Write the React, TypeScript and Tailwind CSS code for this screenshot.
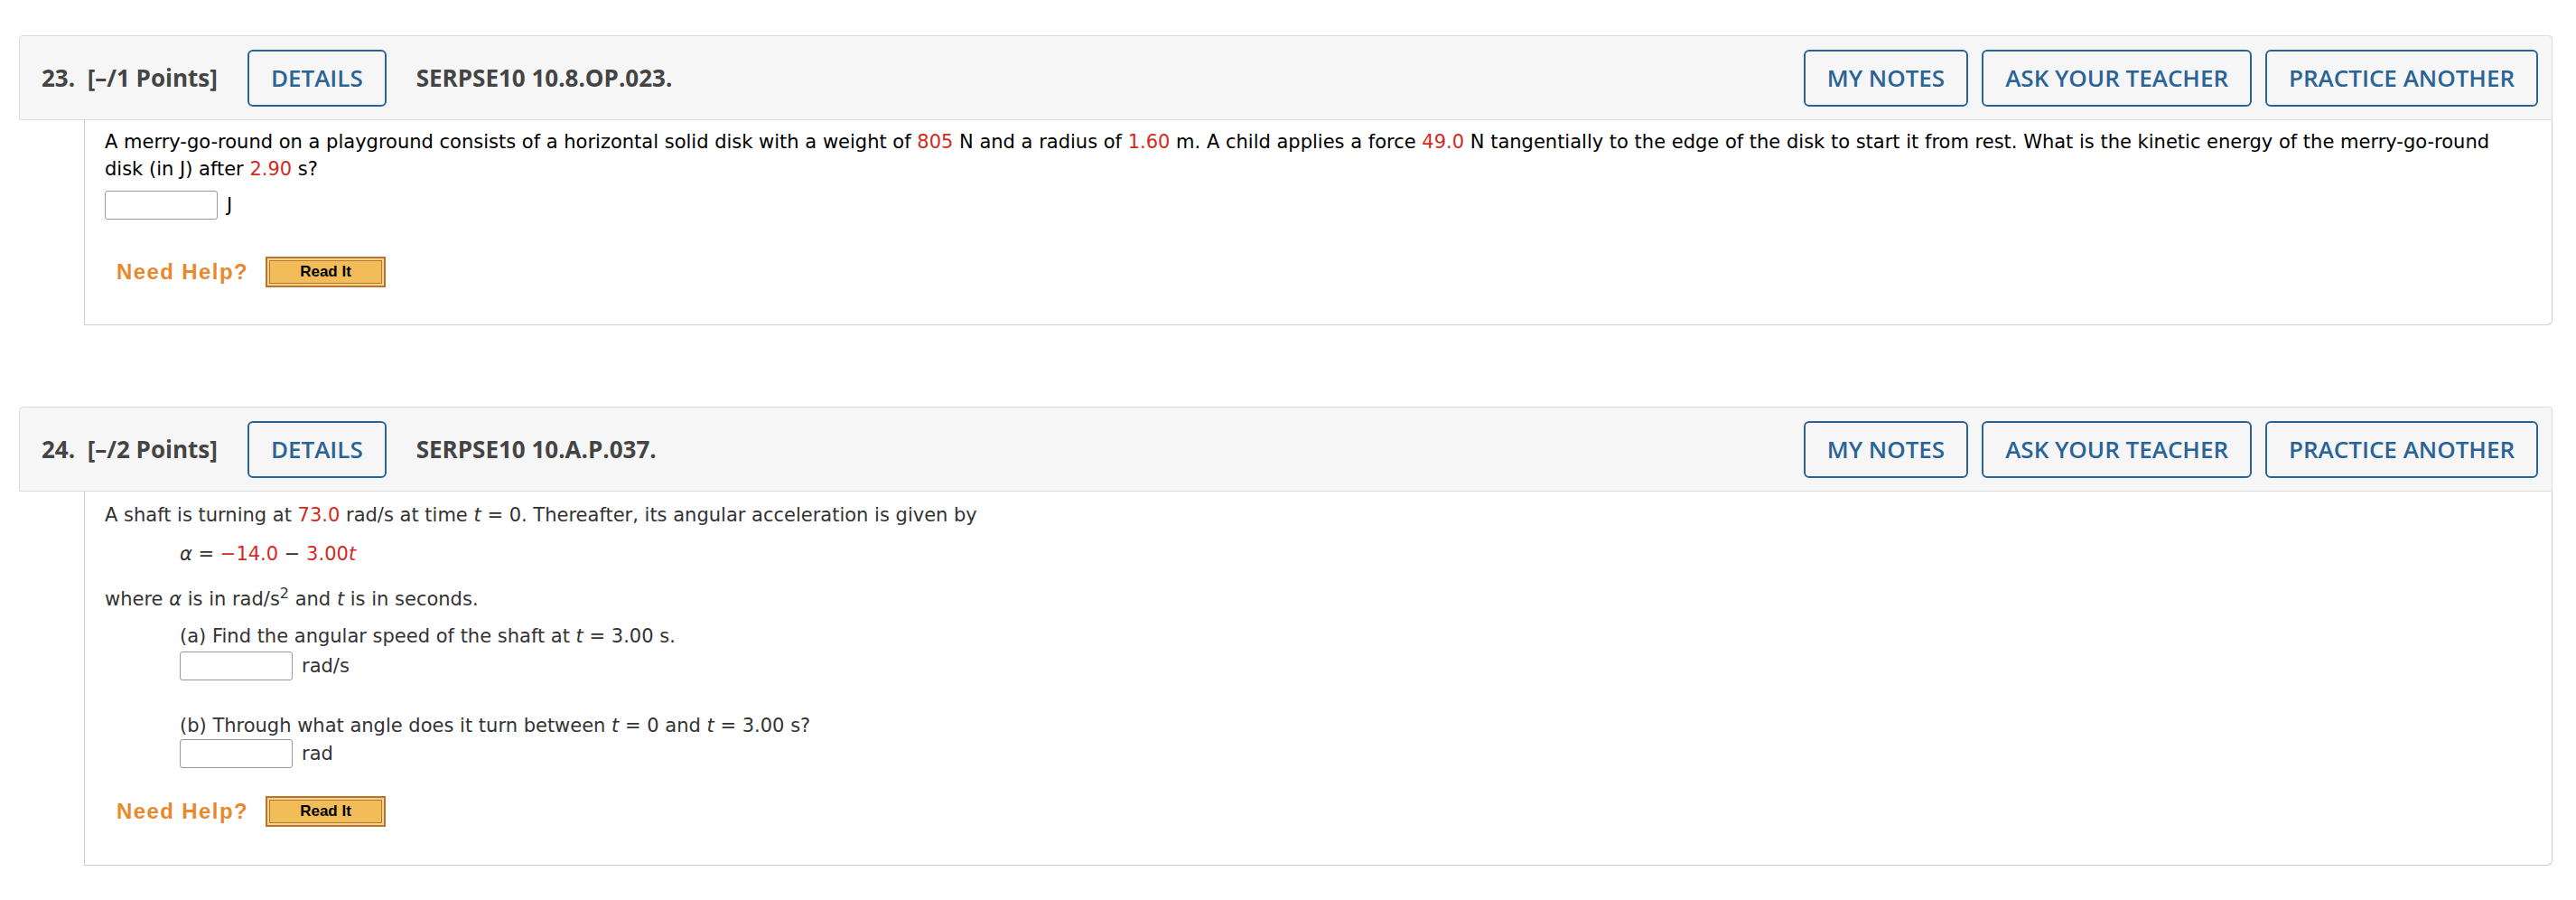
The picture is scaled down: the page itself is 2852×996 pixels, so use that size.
import React from 'react';

const sans = { fontFamily: '"Open Sans", "Liberation Sans", sans-serif' };
const verdana = { fontFamily: '"DejaVu Sans", Verdana, sans-serif' };

function OutlineButton({ label }: { label: string }) {
  return (
    <button
      className="h-[63px] px-[24px] rounded-[6px] border-2 border-[#2a6496] text-[#2a6496] text-[26px] font-semibold leading-none whitespace-nowrap"
      style={sans}
    >
      {label}
    </button>
  );
}

function QuestionHeader({ num, points, code }: { num: string; points: string; code: string }) {
  return (
    <div
      className="flex items-center h-[94px] pl-[24px] pr-[15px] bg-[#f6f6f6] border border-[#dcdcdc] rounded-t-[4px]"
      style={sans}
    >
      <div className="flex items-center gap-[33px] text-[26px] font-bold text-[#444]">
        <span className="whitespace-pre">{`${num}  [–/${points} Points]`}</span>
        <OutlineButton label="DETAILS" />
        <span>{code}</span>
      </div>
      <div className="ml-auto flex items-center gap-[15px]">
        <OutlineButton label="MY NOTES" />
        <OutlineButton label="ASK YOUR TEACHER" />
        <OutlineButton label="PRACTICE ANOTHER" />
      </div>
    </div>
  );
}

function AnswerBox() {
  return <input type="text" className="w-[125px] h-[32px] border border-[#9a9a9a] rounded-[3px] bg-white" />;
}

function NeedHelp() {
  return (
    <div className="flex items-center gap-[19px] pl-[13px]">
      <span
        className="text-[24px] font-bold text-[#e8892e] tracking-[1.4px]"
        style={{ fontFamily: '"Liberation Sans", Arial, sans-serif' }}
      >
        Need Help?
      </span>
      <div className="w-[133px] h-[34px] border-2 border-[#b8742e] bg-[#f7d28a] p-[2px]">
        <div
          className="h-full w-full border border-[#b07a38] bg-[#f2bd58] flex items-center justify-center text-[17px] font-bold text-black"
          style={{ fontFamily: '"Liberation Sans", Arial, sans-serif' }}
        >
          Read It
        </div>
      </div>
    </div>
  );
}

const Red = ({ children }: { children: React.ReactNode }) => <span className="text-[#d32a1f]">{children}</span>;

export default function App() {
  return (
    <div className="min-h-screen bg-white pt-[39px] pl-[21px] pr-[26px]">
      {/* Question 23 */}
      <QuestionHeader num="23." points="1" code="SERPSE10 10.8.OP.023." />
      <div
        className="ml-[72px] border-x border-b border-[#cfcfcf] rounded-br-[6px] pt-[9px] pb-[41px] pl-[22px] pr-[40px] text-[21px] leading-[30px] text-black"
        style={verdana}
      >
        <p>
          A merry-go-round on a playground consists of a horizontal solid disk with a weight of <Red>805</Red> N and a
          radius of <Red>1.60</Red> m. A child applies a force <Red>49.0</Red> N tangentially to the edge of the disk to
          start it from rest. What is the kinetic energy of the merry-go-round disk (in J) after <Red>2.90</Red> s?
        </p>
        <div className="flex items-center gap-[10px] mt-[9px]">
          <AnswerBox />
          <span>J</span>
        </div>
        <div className="mt-[41px]">
          <NeedHelp />
        </div>
      </div>

      {/* Question 24 */}
      <div className="mt-[90px]">
        <QuestionHeader num="24." points="2" code="SERPSE10 10.A.P.037." />
        <div
          className="ml-[72px] border-x border-b border-[#cfcfcf] rounded-br-[6px] pt-[11px] pb-[42px] pl-[22px] pr-[40px] text-[21px] leading-[30px] text-[#333]"
          style={verdana}
        >
          <p>
            A shaft is turning at <Red>73.0</Red> rad/s at time <i>t</i> = 0. Thereafter, its angular acceleration is
            given by
          </p>
          <p className="mt-[13px] pl-[83px]">
            <i>α</i> = <Red>−14.0</Red> − <Red>3.00</Red>
            <Red>
              <i>t</i>
            </Red>
          </p>
          <p className="mt-[20px]">
            where <i>α</i> is in rad/s<sup className="text-[16px]">2</sup> and <i>t</i> is in seconds.
          </p>
          <div className="pl-[83px]">
            <p className="mt-[11px]">
              (a) Find the angular speed of the shaft at <i>t</i> = 3.00 s.
            </p>
            <div className="flex items-center gap-[10px] mt-[2px]">
              <AnswerBox />
              <span>rad/s</span>
            </div>
            <p className="mt-[35px]">
              (b) Through what angle does it turn between <i>t</i> = 0 and <i>t</i> = 3.00 s?
            </p>
            <div className="flex items-center gap-[10px]">
              <AnswerBox />
              <span>rad</span>
            </div>
          </div>
          <div className="mt-[31px]">
            <NeedHelp />
          </div>
        </div>
      </div>
    </div>
  );
}
